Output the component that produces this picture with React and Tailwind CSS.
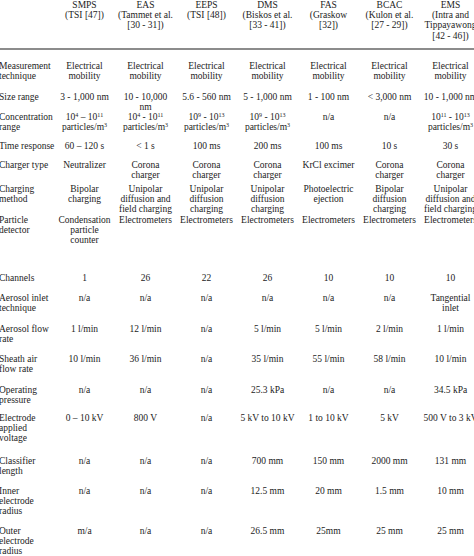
import React from "react";

const headers = [
  ["SMPS", "(TSI [47])"],
  ["EAS", "(Tammet et al.", "[30 - 31])"],
  ["EEPS", "(TSI [48])"],
  ["DMS", "(Biskos et al.", "[33 - 41])"],
  ["FAS", "(Graskow", "[32])"],
  ["BCAC", "(Kulon et al.", "[27 - 29])"],
  ["EMS", "(Intra and", "Tippayawong", "[42 - 46])"],
];

const conc = (a, b, dash = "-") => [
  <>
    10<sup className="text-[6px] leading-none">{a}</sup> {dash} 10
    <sup className="text-[6px] leading-none">{b}</sup>
  </>,
  <>
    particles/m<sup className="text-[6px] leading-none">3</sup>
  </>,
];

// each row: label lines, height in px, cells (array of lines or string)
const rows = [
  {
    label: ["Measurement", "technique"],
    h: "h-[31px]",
    cells: Array(7).fill(["Electrical", "mobility"]),
  },
  {
    label: ["Size range"],
    h: "h-[20px]",
    cells: [
      "3 - 1,000 nm",
      ["10 - 10,000", "nm"],
      "5.6 - 560 nm",
      "5 - 1,000 nm",
      "1 - 100 nm",
      "< 3,000 nm",
      "10 - 1,000 nm",
    ],
  },
  {
    label: ["Concentration", "range"],
    h: "h-[29px]",
    cells: [
      conc("4", "11", "–"),
      conc("4", "11"),
      conc("9", "13"),
      conc("9", "13"),
      "n/a",
      "n/a",
      conc("11", "13"),
    ],
  },
  {
    label: ["Time response"],
    h: "h-[19px]",
    cells: ["60 – 120 s", "< 1 s", "100 ms", "200 ms", "100 ms", "10 s", "30 s"],
  },
  {
    label: ["Charger type"],
    h: "h-[24px]",
    cells: [
      "Neutralizer",
      ["Corona", "charger"],
      ["Corona", "charger"],
      ["Corona", "charger"],
      "KrCl excimer",
      ["Corona", "charger"],
      ["Corona", "charger"],
    ],
  },
  {
    label: ["Charging", "method"],
    h: "h-[31px]",
    cells: [
      ["Bipolar", "charging"],
      ["Unipolar", "diffusion and", "field charging"],
      ["Unipolar", "diffusion", "charging"],
      ["Unipolar", "diffusion", "charging"],
      ["Photoelectric", "ejection"],
      ["Bipolar", "diffusion", "charging"],
      ["Unipolar", "diffusion and", "field charging"],
    ],
  },
  {
    label: ["Particle", "detector"],
    h: "h-[58px]",
    cells: [
      ["Condensation", "particle", "counter"],
      ...Array(6).fill("Electrometers"),
    ],
  },
  {
    label: ["Channels"],
    h: "h-[20px]",
    cells: ["1", "26", "22", "26", "10", "10", "10"],
  },
  {
    label: ["Aerosol inlet", "technique"],
    h: "h-[31px]",
    cells: [...Array(6).fill("n/a"), ["Tangential", "inlet"]],
  },
  {
    label: ["Aerosol flow", "rate"],
    h: "h-[30px]",
    cells: ["1 l/min", "12 l/min", "n/a", "5 l/min", "5 l/min", "2 l/min", "1 l/min"],
  },
  {
    label: ["Sheath air", "flow rate"],
    h: "h-[31px]",
    cells: ["10 l/min", "36 l/min", "n/a", "35 l/min", "55 l/min", "58 l/min", "10 l/min"],
  },
  {
    label: ["Operating", "pressure"],
    h: "h-[28px]",
    cells: ["n/a", "n/a", "n/a", "25.3 kPa", "n/a", "n/a", "34.5 kPa"],
  },
  {
    label: ["Electrode", "applied", "voltage"],
    h: "h-[43px]",
    cells: ["0 – 10 kV", "800 V", "n/a", "5 kV to 10 kV", "1 to 10 kV", "5 kV", "500 V to 3 kV"],
  },
  {
    label: ["Classifier", "length"],
    h: "h-[30px]",
    cells: ["n/a", "n/a", "n/a", "700 mm", "150 mm", "2000 mm", "131 mm"],
  },
  {
    label: ["Inner", "electrode", "radius"],
    h: "h-[40px]",
    cells: ["n/a", "n/a", "n/a", "12.5 mm", "20 mm", "1.5 mm", "10 mm"],
  },
  {
    label: ["Outer", "electrode", "radius"],
    h: "h-[40px]",
    cells: ["m/a", "n/a", "n/a", "26.5 mm", "25mm", "25 mm", "25 mm"],
  },
];

function Lines({ value }) {
  const lines = Array.isArray(value) ? value : [value];
  return lines.map((line, i) => (
    <div key={i} className="whitespace-nowrap h-[10.2px]">
      {line}
    </div>
  ));
}

export default function App() {
  return (
    <div className="w-[474px] h-[556px] overflow-hidden bg-white text-[#1c1c1c] text-[9.5px] leading-[10.2px] font-['Liberation_Serif','Times_New_Roman',serif]">
      <div className="-ml-px w-[482px]">
        {/* header */}
        <div className="flex h-[48px]">
          <div className="w-[55px] shrink-0" />
          {headers.map((h, i) => (
            <div key={i} className="w-[61px] shrink-0 flex flex-col items-center text-center">
              <Lines value={h} />
            </div>
          ))}
        </div>
        <div className="h-[2px] bg-[#8c8c8c]" />
        <div className="h-[11px]" />

        {rows.map((row, r) => (
          <div key={r} className={`flex ${row.h}`}>
            <div className="w-[55px] shrink-0">
              <Lines value={row.label} />
            </div>
            {row.cells.map((c, i) => (
              <div key={i} className="w-[61px] shrink-0 flex flex-col items-center text-center">
                <Lines value={c} />
              </div>
            ))}
          </div>
        ))}
      </div>
    </div>
  );
}
